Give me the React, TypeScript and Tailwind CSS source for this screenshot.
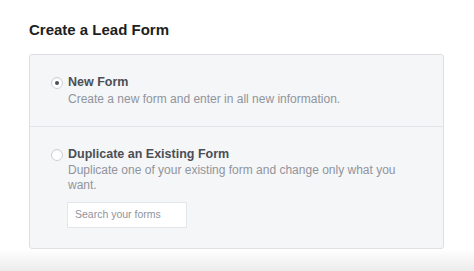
import React from "react";

function Radio({ checked }: { checked?: boolean }) {
  return (
    <span className="mt-[3px] flex h-[12px] w-[12px] shrink-0 items-center justify-center rounded-full border border-[#ccd0d5] bg-white shadow-[inset_0_1px_1px_rgba(0,0,0,0.06)]">
      {checked && <span className="h-[4px] w-[4px] rounded-full bg-[#4b4f56]" />}
    </span>
  );
}

export default function App() {
  return (
    <div
      className="relative h-[271px] w-[474px] overflow-hidden bg-white"
      style={{ fontFamily: '"Liberation Sans", Arial, sans-serif' }}
    >
      <div className="px-[29px] pt-[20px]">
        <h1 className="text-[15px] font-bold leading-[20px] text-[#1c1e21]">Create a Lead Form</h1>
        <div className="mt-[14px] w-[415px] rounded-[3px] border border-[#dddfe2] bg-[#f5f6f7]">
          <div className="flex gap-[5px] border-b border-[#e3e5e8] pl-[21px] pr-4 pt-[19px] pb-[18px]">
            <Radio checked />
            <div>
              <div className="text-[12.5px] font-bold leading-[17px] text-[#4b4f56]">New Form</div>
              <div className="text-[12px] leading-[17px] text-[#90949c]">
                Create a new form and enter in all new information.
              </div>
            </div>
          </div>
          <div className="flex gap-[5px] pl-[21px] pt-[19px] pb-[20px]">
            <Radio />
            <div className="w-[345px]">
              <div className="text-[12.5px] font-bold leading-[17px] text-[#4b4f56]">Duplicate an Existing Form</div>
              <div className="text-[12px] leading-[15px] text-[#90949c]">
                Duplicate one of your existing form and change only what you want.
              </div>
              <div className="mt-[9px] -ml-px flex h-[26px] w-[120px] items-center border border-[#e5e6e9] bg-white px-[7px] text-[10.5px] text-[#90949c]">
                Search your forms
              </div>
            </div>
          </div>
        </div>
      </div>
      <div className="absolute bottom-0 left-0 right-0 h-[22px] bg-gradient-to-b from-white to-[#ececec]" />
    </div>
  );
}
